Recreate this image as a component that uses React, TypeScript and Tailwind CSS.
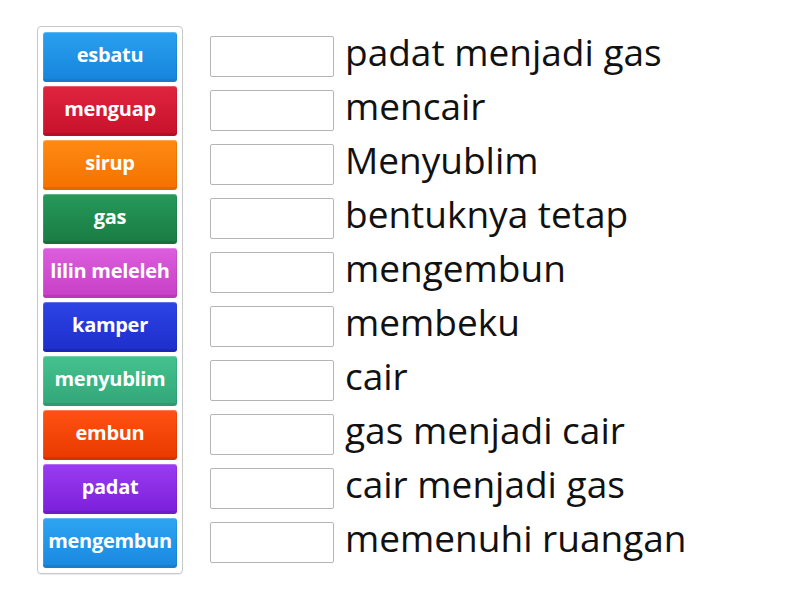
import React from "react";

const tiles: { label: string; cls: string }[] = [
  { label: "esbatu", cls: "bg-[linear-gradient(#2aa0f0,#1686dc)] border-[#1a7bc8]" },
  { label: "menguap", cls: "bg-[linear-gradient(#e0243e,#c8122c)] border-[#b31028]" },
  { label: "sirup", cls: "bg-[linear-gradient(#ff8a14,#f47200)] border-[#e06800]" },
  { label: "gas", cls: "bg-[linear-gradient(#26995a,#1a7d44)] border-[#176f3c]" },
  { label: "lilin meleleh", cls: "bg-[linear-gradient(#dc5ede,#c840c6)] border-[#b737b5]" },
  { label: "kamper", cls: "bg-[linear-gradient(#2d44e6,#1e2fcc)] border-[#1a29b5]" },
  { label: "menyublim", cls: "bg-[linear-gradient(#45c28f,#33a87a)] border-[#2e9a6e]" },
  { label: "embun", cls: "bg-[linear-gradient(#ff5212,#ea3a00)] border-[#d23400]" },
  { label: "padat", cls: "bg-[linear-gradient(#9a3cf0,#7d20dc)] border-[#701cc6]" },
  { label: "mengembun", cls: "bg-[linear-gradient(#2ea4f2,#1a8ae0)] border-[#1a7dcc]" },
];

const targets = [
  "padat menjadi gas",
  "mencair",
  "Menyublim",
  "bentuknya tetap",
  "mengembun",
  "membeku",
  "cair",
  "gas menjadi cair",
  "cair menjadi gas",
  "memenuhi ruangan",
];

export default function App() {
  return (
    <div className="w-[800px] h-[600px] bg-white flex items-start pl-[37px] pt-[26px] font-['Open_Sans',sans-serif]">
      <div className="w-[146px] border border-[#c8c8c8] rounded-[4px] p-[5px] flex flex-col gap-[4px] shadow-[0_1px_1px_rgba(0,0,0,0.08)]">
        {tiles.map((t) => (
          <div
            key={t.label}
            className={`h-[50px] rounded-[3px] border-b-[3px] ${t.cls} shadow-[inset_0_1px_0_rgba(255,255,255,0.25),inset_1px_0_0_rgba(255,255,255,0.12),inset_-1px_0_0_rgba(0,0,0,0.08)] flex items-center justify-center pb-[2px] text-white font-bold text-[20px] leading-none whitespace-nowrap tracking-[-0.3px]`}
          >
            {t.label}
          </div>
        ))}
      </div>
      <div className="ml-[27px] mt-[10px] flex flex-col gap-[13px]">
        {targets.map((t) => (
          <div key={t} className="flex items-center h-[41px]">
            <div className="w-[124px] h-[41px] border border-[#b5b5b5] rounded-[2px] bg-white" />
            <div className="ml-[11px] mb-[11px] text-[37px] leading-none text-[#111] whitespace-nowrap">{t}</div>
          </div>
        ))}
      </div>
    </div>
  );
}
